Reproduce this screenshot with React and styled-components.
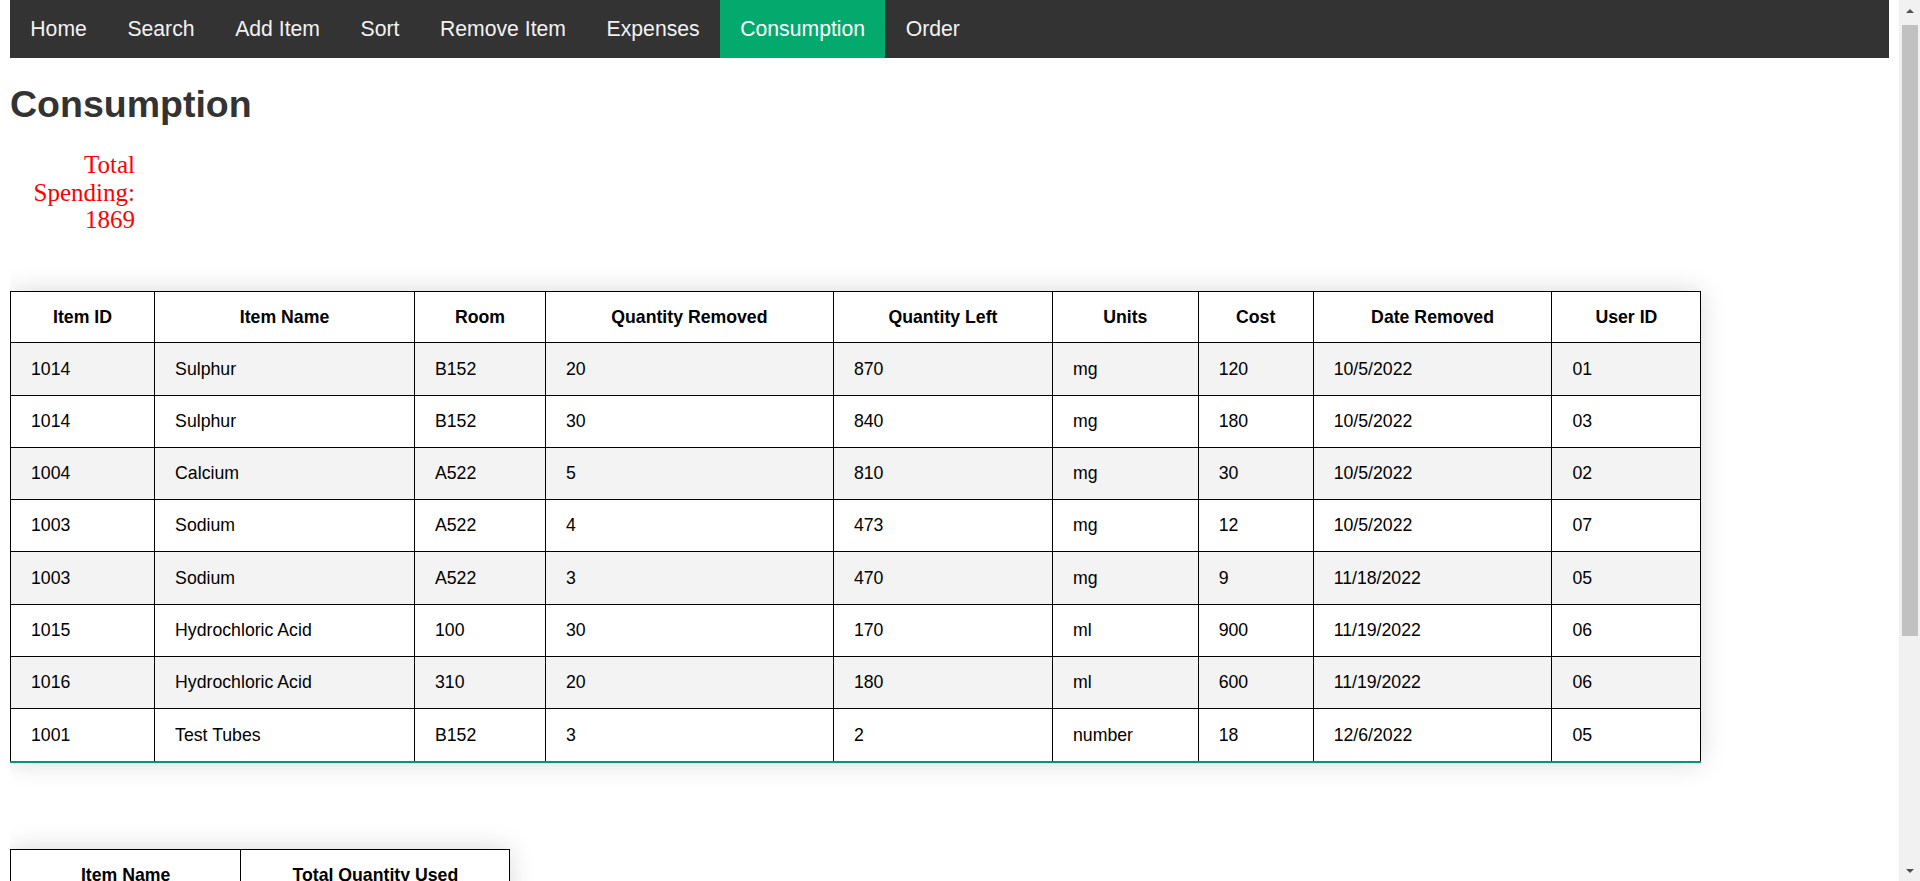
import React from 'react';
import styled, { createGlobalStyle } from 'styled-components';

// ==========================================
// ESTILOS GLOBALES
// ==========================================

const GlobalStyle = createGlobalStyle`
  html {
    scrollbar-width: none;
  }

  body {
    /* 10px de margen + 21px reservados para la barra de scroll */
    margin: 0 31px 10px 10px;
    background: #fff;
    font-family: Arial, 'Liberation Sans', Helvetica, sans-serif;
  }

  ::-webkit-scrollbar {
    display: none;
  }
`;

// ==========================================
// BARRA DE NAVEGACION
// ==========================================

const TopNav = styled.nav`
  display: flex;
  background-color: #333;
  overflow: hidden;
`;

const NavLink = styled.a`
  display: block;
  padding: 16.8px 20.3px;
  font-size: 21.2px;
  line-height: 24px;
  color: ${(p) => (p.$active ? '#fff' : '#f2f2f2')};
  background-color: ${(p) => (p.$active ? '#04aa6d' : 'transparent')};
  text-decoration: none;
  cursor: pointer;

  &:hover {
    background-color: ${(p) => (p.$active ? '#04aa6d' : '#ddd')};
    color: ${(p) => (p.$active ? '#fff' : 'black')};
  }
`;

// ==========================================
// CONTENIDO
// ==========================================

const Title = styled.h1`
  margin: 25.4px 0 25.3px;
  font-size: 37.5px;
  font-weight: bold;
  color: #333;
`;

const TotalBox = styled.div`
  width: 125px;
  text-align: right;
  color: red;
  font-family: 'Times New Roman', 'Liberation Serif', serif;
  font-size: 25px;
  line-height: 27.6px;
`;

const Table = styled.table`
  width: ${(p) => p.$width}px;
  margin-top: ${(p) => p.$top}px;
  border-collapse: collapse;
  table-layout: fixed;
  font-size: 17.7px;
  box-shadow: 0 0 25px rgba(0, 0, 0, 0.15);

  tr:nth-of-type(even) {
    background-color: #f3f3f3;
  }

  tr:last-of-type {
    border-bottom: 2px solid #009879;
  }
`;

const Th = styled.th`
  padding: 15px 20px 15.4px;
  border: 1px solid black;
  line-height: 20.3px;
  font-weight: bold;
  text-align: center;
  color: #000;
`;

const Td = styled.td`
  padding: 15.3px 20px 15.7px;
  border: 1px solid black;
  line-height: 20.3px;
  text-align: left;
  color: #000;
  white-space: nowrap;
`;

// ==========================================
// BARRA DE SCROLL (dibujada)
// ==========================================

const ScrollTrack = styled.div`
  position: fixed;
  top: 0;
  right: 0;
  width: 21px;
  height: 100vh;
  display: flex;
  flex-direction: column;
  align-items: center;
  background: #f1f1f1;
`;

const ScrollArrow = styled.div`
  flex: none;
  height: 21px;
  width: 100%;
  display: flex;
  align-items: center;
  justify-content: center;

  &::before {
    content: '';
    border-left: 4px solid transparent;
    border-right: 4px solid transparent;
    ${(p) => (p.$down ? 'border-top: 4px solid #505050;' : 'border-bottom: 4px solid #505050;')}
  }
`;

const ScrollThumb = styled.div`
  flex: none;
  margin-top: 3.7px;
  margin-left: 1px;
  width: 16px;
  height: 611px;
  background: #c1c1c1;
`;

const ScrollSpacer = styled.div`
  flex: 1;
`;

const Spacer = styled.div`
  height: 31px;
`;

// ==========================================
// DATOS
// ==========================================

const columns = [
  { label: 'Item ID', key: 'id', width: 144.1 },
  { label: 'Item Name', key: 'name', width: 259.9 },
  { label: 'Room', key: 'room', width: 130.9 },
  { label: 'Quantity Removed', key: 'removed', width: 288 },
  { label: 'Quantity Left', key: 'left', width: 219.1 },
  { label: 'Units', key: 'units', width: 145.7 },
  { label: 'Cost', key: 'cost', width: 115 },
  { label: 'Date Removed', key: 'date', width: 238.8 },
  { label: 'User ID', key: 'user', width: 148.9 },
];

const consumption = [
  { id: '1014', name: 'Sulphur', room: 'B152', removed: 20, left: 870, units: 'mg', cost: 120, date: '10/5/2022', user: '01' },
  { id: '1014', name: 'Sulphur', room: 'B152', removed: 30, left: 840, units: 'mg', cost: 180, date: '10/5/2022', user: '03' },
  { id: '1004', name: 'Calcium', room: 'A522', removed: 5, left: 810, units: 'mg', cost: 30, date: '10/5/2022', user: '02' },
  { id: '1003', name: 'Sodium', room: 'A522', removed: 4, left: 473, units: 'mg', cost: 12, date: '10/5/2022', user: '07' },
  { id: '1003', name: 'Sodium', room: 'A522', removed: 3, left: 470, units: 'mg', cost: 9, date: '11/18/2022', user: '05' },
  { id: '1015', name: 'Hydrochloric Acid', room: '100', removed: 30, left: 170, units: 'ml', cost: 900, date: '11/19/2022', user: '06' },
  { id: '1016', name: 'Hydrochloric Acid', room: '310', removed: 20, left: 180, units: 'ml', cost: 600, date: '11/19/2022', user: '06' },
  { id: '1001', name: 'Test Tubes', room: 'B152', removed: 3, left: 2, units: 'number', cost: 18, date: '12/6/2022', user: '05' },
];

const navItems = ['Home', 'Search', 'Add Item', 'Sort', 'Remove Item', 'Expenses', 'Consumption', 'Order'];

function App() {
  const total = consumption.reduce((sum, r) => sum + r.cost, 0);

  // cantidad total usada por producto
  const totals = [];
  consumption.forEach((r) => {
    const found = totals.find((t) => t.name === r.name);
    if (found) found.qty += r.removed;
    else totals.push({ name: r.name, qty: r.removed });
  });

  return (
    <>
      <GlobalStyle />
      <TopNav>
        {navItems.map((item) => (
          <NavLink key={item} $active={item === 'Consumption'}>
            {item}
          </NavLink>
        ))}
      </TopNav>

      <Title>Consumption</Title>
      <TotalBox>Total Spending: {total}</TotalBox>

      <Table $width={1691} $top={56.6}>
        <colgroup>
          {columns.map((c) => (
            <col key={c.key} style={{ width: c.width }} />
          ))}
        </colgroup>
        <tbody>
          <tr>
            {columns.map((c) => (
              <Th key={c.key}>{c.label}</Th>
            ))}
          </tr>
          {consumption.map((row, i) => (
            <tr key={i}>
              {columns.map((c) => (
                <Td key={c.key}>{row[c.key]}</Td>
              ))}
            </tr>
          ))}
        </tbody>
      </Table>

      <Table $width={499.4} $top={86.5}>
        <colgroup>
          <col style={{ width: 230.3 }} />
          <col style={{ width: 269.1 }} />
        </colgroup>
        <tbody>
          <tr>
            <Th>Item Name</Th>
            <Th>Total Quantity Used</Th>
          </tr>
          {totals.map((t) => (
            <tr key={t.name}>
              <Td>{t.name}</Td>
              <Td>{t.qty}</Td>
            </tr>
          ))}
        </tbody>
      </Table>
      <Spacer />

      <ScrollTrack>
        <ScrollArrow />
        <ScrollThumb />
        <ScrollSpacer />
        <ScrollArrow $down />
      </ScrollTrack>
    </>
  );
}

export default App;
